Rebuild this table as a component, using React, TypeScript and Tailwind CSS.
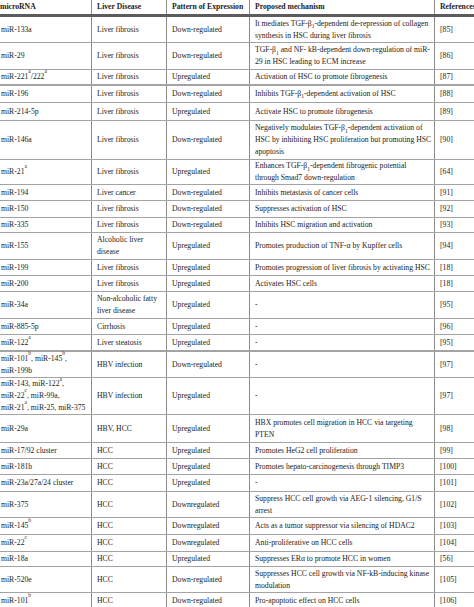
import React from "react";

type Row = {
  mi: React.ReactNode;
  d: React.ReactNode;
  p: string;
  m: React.ReactNode;
  r: string;
  h: number;
  thick?: boolean;
};

const B = () => <sub className="text-[5.5px] align-[-1px]">1</sub>;
const S = ({ c }: { c: string }) => (
  <sup className="text-[5.5px] align-[3px]">{c}</sup>
);

const rows: Row[] = [
  {
    mi: "miR-133a",
    d: "Liver fibrosis",
    p: "Down-regulated",
    m: (
      <>
        It mediates TGF-β<B />-dependent de-repression of collagen
        <br />
        synthesis in HSC during liver fibrosis
      </>
    ),
    r: "[85]",
    h: 26,
  },
  {
    mi: "miR-29",
    d: "Liver fibrosis",
    p: "Down-regulated",
    m: (
      <>
        TGF-β<B /> and NF- kB-dependent down-regulation of miR-
        <br />
        29 in HSC leading to ECM increase
      </>
    ),
    r: "[86]",
    h: 27,
  },
  {
    mi: (
      <>
        miR-221<S c="a" />/222<S c="a" />
      </>
    ),
    d: "Liver fibrosis",
    p: "Upregulated",
    m: "Activation of HSC to promote fibrogenesis",
    r: "[87]",
    h: 16,
    thick: true,
  },
  {
    mi: "miR-196",
    d: "Liver fibrosis",
    p: "Down-regulated",
    m: (
      <>
        Inhibits TGF-β<B />-dependent activation of HSC
      </>
    ),
    r: "[88]",
    h: 17,
  },
  {
    mi: "miR-214-5p",
    d: "Liver fibrosis",
    p: "Upregulated",
    m: "Activate HSC to promote fibrogenesis",
    r: "[89]",
    h: 18,
  },
  {
    mi: "miR-146a",
    d: "Liver fibrosis",
    p: "Down-regulated",
    m: (
      <>
        Negatively modulates TGF-β<B />-dependent activation of
        <br />
        HSC by inhibiting HSC proliferation but promoting HSC
        <br />
        apoptosis
      </>
    ),
    r: "[90]",
    h: 39,
  },
  {
    mi: (
      <>
        miR-21<S c="a" />
      </>
    ),
    d: "Liver fibrosis",
    p: "Upregulated",
    m: (
      <>
        Enhances TGF-β<B />-dependent fibrogenic potential
        <br />
        through Smad7 down-regulation
      </>
    ),
    r: "[64]",
    h: 25,
  },
  {
    mi: "miR-194",
    d: "Liver cancer",
    p: "Down-regulated",
    m: "Inhibits metastasis of cancer cells",
    r: "[91]",
    h: 16,
  },
  {
    mi: "miR-150",
    d: "Liver fibrosis",
    p: "Down-regulated",
    m: "Suppresses activation of HSC",
    r: "[92]",
    h: 17,
  },
  {
    mi: "miR-335",
    d: "Liver fibrosis",
    p: "Down-regulated",
    m: "Inhibits HSC migration and activation",
    r: "[93]",
    h: 15,
  },
  {
    mi: "miR-155",
    d: (
      <>
        Alcoholic liver
        <br />
        disease
      </>
    ),
    p: "Upregulated",
    m: "Promotes production of TNF-α by Kupffer cells",
    r: "[94]",
    h: 27,
  },
  {
    mi: "miR-199",
    d: "Liver fibrosis",
    p: "Upregulated",
    m: "Promotes progression of liver fibrosis by activating HSC",
    r: "[18]",
    h: 16,
  },
  {
    mi: "miR-200",
    d: "Liver fibrosis",
    p: "Upregulated",
    m: "Activates HSC cells",
    r: "[18]",
    h: 16,
  },
  {
    mi: "miR-34a",
    d: (
      <>
        Non-alcoholic fatty
        <br />
        liver disease
      </>
    ),
    p: "Upregulated",
    m: "-",
    r: "[95]",
    h: 27,
  },
  {
    mi: "miR-885-5p",
    d: "Cirrhosis",
    p: "Upregulated",
    m: "-",
    r: "[96]",
    h: 16,
  },
  {
    mi: (
      <>
        miR-122<S c="a" />
      </>
    ),
    d: "Liver steatosis",
    p: "Upregulated",
    m: "-",
    r: "[95]",
    h: 17,
    thick: true,
  },
  {
    mi: (
      <>
        miR-101<S c="b" />, miR-145<S c="b" />,
        <br />
        miR-199b
      </>
    ),
    d: "HBV infection",
    p: "Down-regulated",
    m: "-",
    r: "[97]",
    h: 26,
  },
  {
    mi: (
      <>
        miR-143, miR-122<S c="a" />,
        <br />
        miR-22<S c="c" />, miR-99a,
        <br />
        miR-21<S c="a" />, miR-25, miR-375
      </>
    ),
    d: "HBV infection",
    p: "Upregulated",
    m: "-",
    r: "[97]",
    h: 37,
  },
  {
    mi: "miR-29a",
    d: "HBV, HCC",
    p: "Upregulated",
    m: (
      <>
        HBX promotes cell migration in HCC via targeting
        <br />
        PTEN
      </>
    ),
    r: "[98]",
    h: 28,
  },
  {
    mi: "miR-17/92 cluster",
    d: "HCC",
    p: "Upregulated",
    m: "Promotes HeG2 cell proliferation",
    r: "[99]",
    h: 16,
  },
  {
    mi: "miR-181b",
    d: "HCC",
    p: "Upregulated",
    m: "Promotes hepato-carcinogenesis through TIMP3",
    r: "[100]",
    h: 16,
  },
  {
    mi: "miR-23a/27a/24 cluster",
    d: "HCC",
    p: "Upregulated",
    m: "-",
    r: "[101]",
    h: 17,
  },
  {
    mi: "miR-375",
    d: "HCC",
    p: "Downregulated",
    m: (
      <>
        Suppress HCC cell growth via AEG-1 silencing, G1/S
        <br />
        arrest
      </>
    ),
    r: "[102]",
    h: 26,
  },
  {
    mi: (
      <>
        miR-145<S c="b" />
      </>
    ),
    d: "HCC",
    p: "Downregulated",
    m: "Acts as a tumor suppressor via silencing of HDAC2",
    r: "[103]",
    h: 17,
  },
  {
    mi: (
      <>
        miR-22<S c="c" />
      </>
    ),
    d: "HCC",
    p: "Downregulated",
    m: "Anti-proliferative on HCC cells",
    r: "[104]",
    h: 17,
  },
  {
    mi: "miR-18a",
    d: "HCC",
    p: "Upregulated",
    m: "Suppresses ERα to promote HCC in women",
    r: "[56]",
    h: 15,
  },
  {
    mi: "miR-520e",
    d: "HCC",
    p: "Down-regulated",
    m: (
      <>
        Suppresses HCC cell growth via NF-kB-inducing kinase
        <br />
        modulation
      </>
    ),
    r: "[105]",
    h: 26,
  },
  {
    mi: (
      <>
        miR-101<S c="b" />
      </>
    ),
    d: "HCC",
    p: "Down-regulated",
    m: "Pro-apoptotic effect on HCC cells",
    r: "[106]",
    h: 17,
  },
];

const cell = "flex items-center whitespace-nowrap border-l border-[#8a8a8a] pl-[5px]";

export default function App() {
  return (
    <div
      className="w-[474px] h-[607px] overflow-hidden bg-white text-[#222] text-[7.7px] leading-[11.8px]"
      style={{ fontFamily: '"Liberation Serif", "Times New Roman", serif' }}
    >
      <div className="w-[500px]">
        {/* header */}
        <div className="flex h-[17px] border-b-[3px] border-[#5c5c5c] font-bold">
          <div className="flex items-center w-[91px] pl-[0px]">microRNA</div>
          <div className={`${cell} w-[75px]`}>Liver Disease</div>
          <div className={`${cell} w-[83px]`}>Pattern of Expression</div>
          <div className={`${cell} w-[185px]`}>Proposed mechanism</div>
          <div className={`${cell} w-[66px]`}>References</div>
        </div>

        {rows.map((row, i) => (
          <div
            key={i}
            className={`flex ${row.thick ? "border-b-2" : "border-b"} border-[#a3a3a3]`}
            style={{ height: row.h }}
          >
            <div className="flex items-center whitespace-nowrap w-[91px] pl-[1px]">
              <span>{row.mi}</span>
            </div>
            <div className={`${cell} w-[75px]`}>
              <span>{row.d}</span>
            </div>
            <div className={`${cell} w-[83px]`}>{row.p}</div>
            <div className={`${cell} w-[185px]`}>
              <span>{row.m}</span>
            </div>
            <div className={`${cell} w-[66px]`}>{row.r}</div>
          </div>
        ))}
      </div>
    </div>
  );
}
